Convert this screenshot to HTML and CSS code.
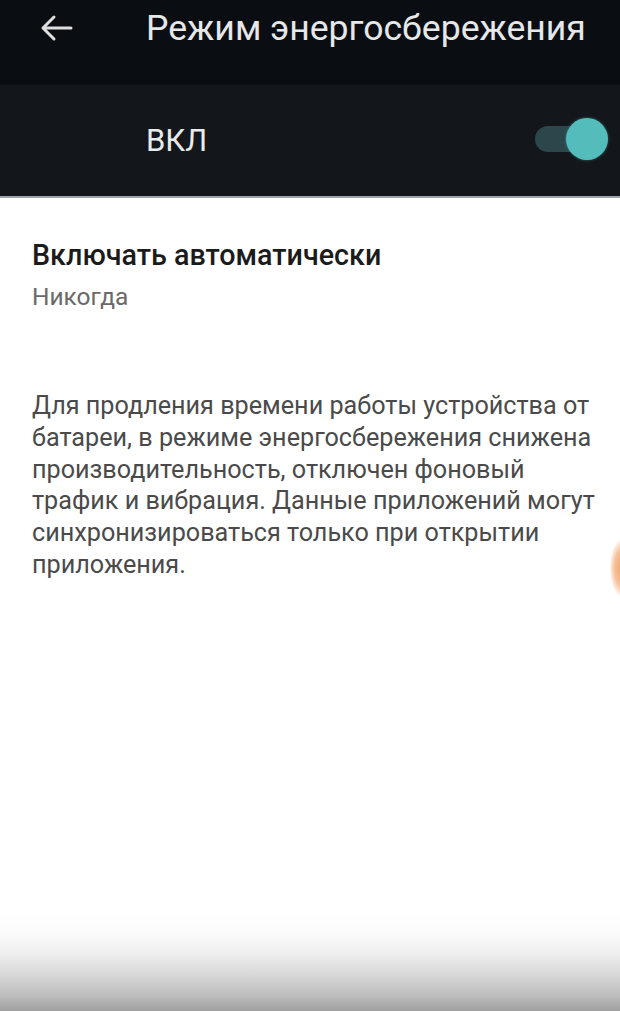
FILE: index.html
```html
<!DOCTYPE html>
<html lang="ru">
<head>
<meta charset="utf-8">
<title>Режим энергосбережения</title>
<link rel="stylesheet" href="styles.css">
</head>
<body>
<div class="screen">
  <header class="appbar">
    <svg class="back" width="34" height="30" viewBox="0 0 34 30" aria-hidden="true">
      <path d="M32 15 H4 M15 4 L4 15 L15 26" fill="none" stroke="#dcdedf" stroke-width="3" stroke-linecap="round" stroke-linejoin="round"/>
    </svg>
    <h1 class="title">Режим энергосбережения</h1>
  </header>
  <div class="masterbar">
    <span class="master-label">ВКЛ</span>
    <div class="switch">
      <span class="track"></span>
      <span class="thumb"></span>
    </div>
  </div>
  <main class="content">
    <div class="pref">
      <div class="pref-title">Включать автоматически</div>
      <div class="pref-summary">Никогда</div>
    </div>
    <p class="note">Для продления времени работы устройства от батареи, в режиме энергосбережения снижена производительность, отключен фоновый трафик и вибрация. Данные приложений могут синхронизироваться только при открытии приложения.</p>
  </main>
  <div class="edge-glow"></div>
  <div class="bottom-fade"></div>
</div>
</body>
</html>
```

FILE: styles.css
```css
* { box-sizing: border-box; }
html, body { margin: 0; padding: 0; }
body {
  width: 620px;
  height: 1011px;
  overflow: hidden;
  background: #ffffff;
  font-family: Roboto, "Noto Sans", "DejaVu Sans", sans-serif;
}
.screen {
  position: relative;
  width: 620px;
  height: 1011px;
  display: flex;
  flex-direction: column;
}
.appbar {
  height: 85px;
  background: #0a0d11;
  display: flex;
  align-items: center;
  padding-left: 39px;
  padding-bottom: 30px;
}
.back { flex: none; }
.title {
  margin: 0 0 0 73px;
  font-size: 35.6px;
  line-height: 40px;
  font-weight: 400;
  color: #e6e7e8;
  white-space: nowrap;
}
.masterbar {
  height: 113px;
  background: #13171b;
  border-bottom: 2px solid #9fa4a8;
  display: flex;
  align-items: center;
  justify-content: space-between;
  padding: 0 12px 0 146px;
}
.master-label {
  font-size: 31px;
  line-height: 36px;
  color: #e9eaeb;
}
.switch {
  display: flex;
  align-items: center;
  width: 73px;
  height: 42px;
  margin-bottom: 4px;
}
.track {
  flex: none;
  width: 55px;
  height: 26px;
  border-radius: 13px;
  background: #2b474b;
}
.thumb {
  flex: none;
  width: 42px;
  height: 42px;
  margin-left: -24px;
  border-radius: 50%;
  background: #55bcbc;
  box-shadow: 0 0 3px rgba(85, 188, 188, 0.5);
}
.content {
  padding: 40px 12px 0 32px;
}
.pref-title {
  font-size: 28.7px;
  font-weight: 500;
  color: #1b1b1b;
  line-height: 34px;
}
.pref-summary {
  font-size: 24.5px;
  color: #6a6a6a;
  line-height: 34px;
  margin-top: 8px;
}
.note {
  margin: 76px 0 0;
  font-size: 25.2px;
  line-height: 31.8px;
  color: #4a4a4a;
}
.edge-glow {
  position: absolute;
  right: -14px;
  top: 540px;
  width: 24px;
  height: 56px;
  border-radius: 50%;
  background: radial-gradient(ellipse at center, #f3a36a 0%, #f6c29c 45%, rgba(255,255,255,0) 75%);
}
.bottom-fade {
  position: absolute;
  left: 0;
  right: 0;
  bottom: 0;
  height: 100px;
  background: linear-gradient(to bottom, #ffffff 0%, #fafafa 25%, #ececec 45%, #d6d6d6 65%, #bcbcbc 85%, #a0a0a0 100%);
}
```
